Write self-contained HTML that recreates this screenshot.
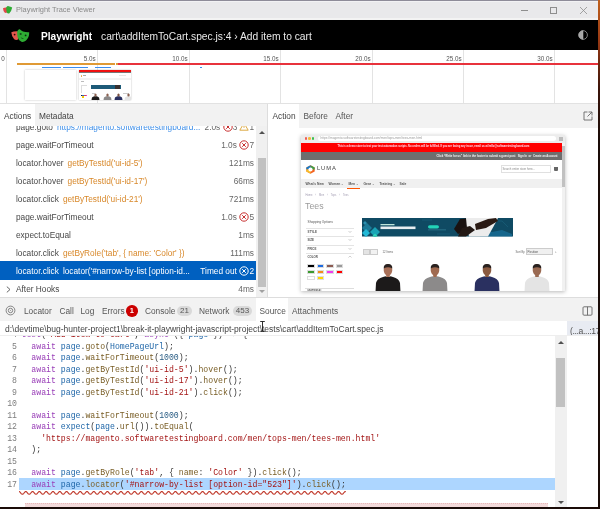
<!DOCTYPE html>
<html><head><meta charset="utf-8">
<style>
*{margin:0;padding:0;box-sizing:border-box}
html,body{width:600px;height:509px;overflow:hidden;background:linear-gradient(180deg,#c0601c 0,#9a3a14 40px,#3a140a 90px,#1a0c08 140px)}
body{position:relative;font-family:"Liberation Sans",sans-serif;color:#333}
.a{position:absolute;white-space:nowrap}
#win{position:absolute;left:0;top:0;width:598px;height:507px;background:#fff;overflow:hidden;filter:blur(0.35px)}
/* title bar */
#tb{left:0;top:0;width:598px;height:20px;background:linear-gradient(180deg,#f2f2f4 0,#f2f2f4 1px,#e9e9eb 1px,#e9e9eb 17px,#f3f3f3 17px);border-top:1px solid #8e8c99}
#tb .t{left:16px;top:4px;font-size:7.4px;line-height:10px;color:#8a8a8a}
/* header */
#hd{left:0;top:20px;width:598px;height:30px;background:#000}
/* timeline */
#tl{left:0;top:50px;width:598px;height:54px;background:#fff;border-bottom:1px solid #e2e2e2}
.gl{position:absolute;top:0;width:1px;height:53px;background:#e3e3e3}
.tk{position:absolute;top:5px;font-size:6.3px;line-height:7px;color:#555;text-align:right;width:29px}
/* tabs */
.tabs{background:#f2f2f2}
.tab{position:absolute;top:0;height:100%;font-size:8.3px;color:#555}
.tab.sel{background:#fff;color:#333}
/* action list */
.row{position:absolute;left:0;width:256px;height:18px;font-size:8.3px;line-height:18px;color:#333}
.row .n{position:absolute;left:16px}
.row .s{color:#c77d20}
.row .r{position:absolute;right:2px;color:#666}
.row{font-size:8.3px;color:#474747}
/* code */
.code{font-family:"Liberation Mono",monospace;font-size:8.2px}
.ln{position:absolute;left:0;width:17px;text-align:right;color:#7d7d7d}
.cl{position:absolute;left:21.5px;color:#333;white-space:pre}
.ln{white-space:pre}
.k{color:#9a40b8}
.v{color:#1f66a8}
.f{color:#795e26}
.st{color:#a31515}
.nm{color:#2a5d84}
</style></head><body>
<div id="win">
  <div id="tb" class="a">
    <svg class="a" style="left:0;top:-1px" width="20" height="20" viewBox="0 0 20 20">
      <path d="M3 8.2 Q5 7.2 7 7.6 L7.2 12.6 Q5.5 13.2 4.6 12.6 Q3.2 10.8 3 8.2Z" fill="#e04848"/>
      <path d="M6.2 7.4 Q7.5 5.8 8.6 6.2 Q10.5 6.6 12.2 7.6 Q11.6 11.2 9.2 13.4 Q7.2 13.6 6.8 12.4 Q6.2 10 6.2 7.4Z" fill="#2eac33"/>
    </svg>
    <div class="a t">Playwright Trace Viewer</div>
    <div class="a" style="left:521px;top:9.3px;width:7px;height:1px;background:#8e8e8e"></div>
    <div class="a" style="left:550px;top:6px;width:7px;height:7px;border:0.9px solid #8e8e8e"></div>
    <svg class="a" style="left:579px;top:5px" width="9" height="9" viewBox="0 0 9 9"><path d="M1 1L8 8M8 1L1 8" stroke="#8e8e8e" stroke-width="0.8"/></svg>
  </div>
  <div id="hd" class="a">
    <svg class="a" style="left:8px;top:4px" width="26" height="22" viewBox="8 24 26 22">
      <path d="M11.3 32.2 Q14 31.2 18 31.4 L18.2 39.6 Q15.6 40.4 14.2 39.2 Q11.6 36.6 11.3 32.2Z" fill="#e2574c"/>
      <circle cx="14.6" cy="34.6" r="0.9" fill="#300"/>
      <path d="M17.2 31.2 Q18.6 28.8 19.8 29.2 Q21.2 30.6 23 31.4 Q26 32.4 29.2 32.2 Q29.4 37.2 26 40.6 Q23.8 42.4 21.4 41.8 Q18.6 40.4 17.6 37.2 Q17 34.2 17.2 31.2Z" fill="#2ead33"/>
      <ellipse cx="20.7" cy="34" rx="1.1" ry="0.8" fill="#0a2a10"/>
      <circle cx="25.6" cy="35.4" r="0.9" fill="#0a2a10"/>
      <path d="M20.5 37.4 Q22.5 37.6 24 38.8 Q22 39.2 20.5 37.4Z" fill="#0a2a10"/>
    </svg>
    <svg class="a" style="left:577px;top:9px" width="12" height="12" viewBox="0 0 12 12"><circle cx="6" cy="6" r="4.4" fill="none" stroke="#a0a0a0" stroke-width="0.8"/><path d="M6 1.6 A4.4 4.4 0 0 0 6 10.4Z" fill="#a8a8a8"/><path d="M6 1.6V10.4" stroke="#c0c0c0" stroke-width="0.5"/></svg>
    <div class="a" style="left:41px;top:10.5px;font-size:10.1px;font-weight:bold;color:#fff;line-height:12px">Playwright</div>
    <div class="a" style="left:101px;top:10.5px;font-size:10.25px;color:#e8e8e8;line-height:12px">cart\addItemToCart.spec.js:4 › Add item to cart</div>
  </div>
  <div id="tl" class="a">
    <div class="gl" style="left:6px"></div>
    <div class="gl" style="left:97px"></div>
    <div class="gl" style="left:189px"></div>
    <div class="gl" style="left:280px"></div>
    <div class="gl" style="left:372px"></div>
    <div class="gl" style="left:463px"></div>
    <div class="gl" style="left:554px"></div>
    <div class="tk" style="left:-24.3px">0</div><div class="tk" style="left:66.7px">5.0s</div><div class="tk" style="left:158.7px">10.0s</div><div class="tk" style="left:249.7px">15.0s</div><div class="tk" style="left:341.7px">20.0s</div><div class="tk" style="left:432.7px">25.0s</div><div class="tk" style="left:523.7px">30.0s</div>
    <div class="a" style="left:16.5px;top:13px;width:98px;height:1.8px;background:#e09a35"></div>
    <div class="a" style="left:116px;top:13px;width:2px;height:1.8px;background:#e09a35"></div>
    <div class="a" style="left:118px;top:13px;width:480px;height:1.8px;background:#e8323c"></div>
    <div class="a" style="left:42px;top:16.6px;width:19.4px;height:1.5px;background:#3b8df0"></div>
    <div class="a" style="left:63px;top:16.6px;width:25.4px;height:1.5px;background:#3b8df0"></div>
    <div class="a" style="left:94.6px;top:16.6px;width:16.4px;height:1.5px;background:#3b8df0"></div>
    <div class="a" style="left:200px;top:16.6px;width:1.5px;height:1.5px;background:#3b8df0"></div>
    <div class="a" style="left:24.6px;top:20.4px;width:51.4px;height:29.2px;background:#fff;box-shadow:0 0 2px rgba(0,0,0,.25)"></div>
    <div class="a" style="left:79px;top:20px;width:52px;height:30px;background:#fff;box-shadow:0 0 1.5px rgba(0,0,0,.3);overflow:hidden">
      <div class="a" style="left:0;top:0;width:52px;height:2px;background:#f01010"></div>
      <div class="a" style="left:0;top:2px;width:52px;height:1px;background:#777"></div>
      <div class="a" style="left:1.5px;top:5px;width:1.6px;height:1.6px;background:#e9a23b;border-radius:50%"></div>
      <div class="a" style="left:3.5px;top:5.3px;width:3px;height:1px;background:#aaa"></div>
      <div class="a" style="left:40px;top:5.2px;width:7px;height:1.2px;background:#e6e6e6"></div>
      <div class="a" style="left:0;top:8px;width:52px;height:1.5px;background:#f2f2f2"></div>
      <div class="a" style="left:1.5px;top:11.2px;width:3px;height:1.2px;background:#bbb"></div>
      <div class="a" style="left:1.5px;top:15px;width:6.5px;height:8px;border-left:0.6px solid #ddd;border-top:0.6px solid #ddd"></div>
      <div class="a" style="left:12px;top:15px;width:30px;height:3.8px;background:#1d5a78"></div>
      <div class="a" style="left:36px;top:15px;width:5px;height:3.8px;background:#3a3030"></div>
      <div class="a" style="left:1.5px;top:24.5px;width:1.5px;height:1.5px;background:#222"></div>
      <div class="a" style="left:3.2px;top:24.5px;width:1.5px;height:1.5px;background:#36c"></div>
      <div class="a" style="left:5px;top:24.5px;width:1.5px;height:1.5px;background:#c55"></div>
      <div class="a" style="left:6.7px;top:24.5px;width:1.5px;height:1.5px;background:#e3c"></div>
      <div class="a" style="left:3.2px;top:26.2px;width:1.5px;height:1.5px;background:#fc0"></div>
      <div class="a" style="left:13px;top:23px;width:3px;height:1px;background:#ccc"></div>
      <div class="a" style="left:44px;top:23px;width:6px;height:1px;background:#ccc"></div>
      <svg class="a" style="left:0;top:0" width="52" height="30" viewBox="0 0 52 30">
        <g><path d="M12.5 30 L13 27.5 Q14 26.6 15.3 26.3 L17.7 26.3 Q19 26.6 20 27.5 L20.5 30Z" fill="#1c1a1a"/><ellipse cx="16.5" cy="25" rx="1.2" ry="1.6" fill="#8a6050"/></g>
        <g><path d="M24.5 30 L25 27.5 Q26 26.6 27.3 26.3 L29.7 26.3 Q31 26.6 32 27.5 L32.5 30Z" fill="#8c8a8a"/><ellipse cx="28.5" cy="25" rx="1.2" ry="1.6" fill="#8a6050"/></g>
        <g><path d="M35.5 30 L36 27.5 Q37 26.6 38.3 26.3 L40.7 26.3 Q42 26.6 43 27.5 L43.5 30Z" fill="#2a3060"/><ellipse cx="39.5" cy="25" rx="1.2" ry="1.6" fill="#7a5040"/></g>
        <g><path d="M45.5 30 L46 27.5 Q47 26.6 48.3 26.3 L50.7 26.3 Q52 26.6 53 27.5 L53.5 30Z" fill="#e4e4e4"/><ellipse cx="49.5" cy="25" rx="1.2" ry="1.6" fill="#8a6050"/></g>
      </svg>
    </div>
  </div>
  <!-- left tabs -->
  <div class="a tabs" style="left:0;top:104px;width:267px;height:22px">
    <div class="tab sel" style="left:0;width:35px"></div>
    <div class="a" style="left:4px;top:1.2px;font-size:8.3px;line-height:22px;color:#444">Actions</div>
    <div class="a" style="left:39px;top:1.2px;font-size:8.3px;line-height:22px;color:#444">Metadata</div>
  </div>
  <!-- action list -->
  <div class="a" style="left:0;top:126px;width:267px;height:172px;background:#fff;overflow:hidden">
    <div class="row" style="top:-8.5px"><span class="n">page.goto<span style="color:#3d8ee8;margin-left:4px">https://magento.softwaretestingboard...</span></span><span class="r" style="color:#666">2.0s<svg width="10" height="10" viewBox="0 0 10 10" style="vertical-align:-2px;margin-left:2.5px"><circle cx="5" cy="5" r="4.2" fill="none" stroke="#c83030" stroke-width="1"/><path d="M3.2 3.2L6.8 6.8M6.8 3.2L3.2 6.8" stroke="#c83030" stroke-width="1"/></svg>3<svg width="10" height="9" viewBox="0 0 10 9" style="vertical-align:-1.5px;margin-left:2px"><path d="M5 1L9.2 8.2H0.8Z" fill="none" stroke="#d9a030" stroke-width="0.9"/><path d="M5 3.5V5.8" stroke="#d9a030" stroke-width="0.9"/></svg>1</span></div>
    <div class="row" style="top:9.5px"><span class="n">page.waitForTimeout</span><span class="r" style="color:#666">1.0s<svg width="10" height="10" viewBox="0 0 10 10" style="vertical-align:-2px;margin-left:2.5px"><circle cx="5" cy="5" r="4.2" fill="none" stroke="#c83030" stroke-width="1"/><path d="M3.2 3.2L6.8 6.8M6.8 3.2L3.2 6.8" stroke="#c83030" stroke-width="1"/></svg>7</span></div>
    <div class="row" style="top:27.5px"><span class="n">locator.hover<span style="color:#d8882a;margin-left:4px">getByTestId('ui-id-5')</span></span><span class="r" style="color:#666">121ms</span></div>
    <div class="row" style="top:45.5px"><span class="n">locator.hover<span style="color:#d8882a;margin-left:4px">getByTestId('ui-id-17')</span></span><span class="r" style="color:#666">66ms</span></div>
    <div class="row" style="top:63.5px"><span class="n">locator.click<span style="color:#d8882a;margin-left:4px">getByTestId('ui-id-21')</span></span><span class="r" style="color:#666">721ms</span></div>
    <div class="row" style="top:81.5px"><span class="n">page.waitForTimeout</span><span class="r" style="color:#666">1.0s<svg width="10" height="10" viewBox="0 0 10 10" style="vertical-align:-2px;margin-left:2.5px"><circle cx="5" cy="5" r="4.2" fill="none" stroke="#c83030" stroke-width="1"/><path d="M3.2 3.2L6.8 6.8M6.8 3.2L3.2 6.8" stroke="#c83030" stroke-width="1"/></svg>5</span></div>
    <div class="row" style="top:99.5px"><span class="n">expect.toEqual</span><span class="r" style="color:#666">1ms</span></div>
    <div class="row" style="top:117.5px"><span class="n">locator.click<span style="color:#d8882a;margin-left:4px">getByRole('tab', { name: 'Color' })</span></span><span class="r" style="color:#666">111ms</span></div>
    <div class="a" style="left:0;top:135px;width:256px;height:19px;background:#0060c0"></div>
    <div class="row" style="top:135.5px;color:#fff"><span class="n">locator.click<span style="color:#fff;margin-left:4px">locator('#narrow-by-list [option-id...</span></span><span class="r" style="color:#fff">Timed out<svg width="10" height="10" viewBox="0 0 10 10" style="vertical-align:-2px;margin-left:2.5px"><circle cx="5" cy="5" r="4.2" fill="none" stroke="#fff" stroke-width="1"/><path d="M3.2 3.2L6.8 6.8M6.8 3.2L3.2 6.8" stroke="#fff" stroke-width="1"/></svg>2</span></div>
    <div class="row" style="top:153.5px"><svg class="a" style="left:6px;top:6px" width="5" height="7" viewBox="0 0 5 7"><path d="M0.8 0.6L4 3.5L0.8 6.4" fill="none" stroke="#555" stroke-width="0.9"/></svg><span class="n">After Hooks</span><span class="r" style="color:#666">4ms</span></div>
    <div class="a" style="left:256px;top:0;width:11px;height:172px;background:#f0f0f0"></div>
    <div class="a" style="left:258px;top:31.7px;width:7.7px;height:129.7px;background:#c1c1c1"></div>
    <svg class="a" style="left:258px;top:4px" width="8" height="5" viewBox="0 0 8 5"><path d="M1 4L4 1L7 4Z" fill="#505050"/></svg>
    <svg class="a" style="left:258px;top:163px" width="8" height="5" viewBox="0 0 8 5"><path d="M1 1L4 4L7 1Z" fill="#a0a0a0"/></svg>
  </div>
  <!-- right panel -->
  <div class="a" style="left:267px;top:104px;width:331px;height:194px;background:#fff;border-left:1px solid #ddd">
    <div class="a tabs" style="left:0;top:0;width:330px;height:23.5px">
      <div class="tab sel" style="left:0;width:31px"></div>
      <div class="a" style="left:4.5px;top:1px;font-size:8.3px;line-height:23px;color:#444">Action</div>
      <div class="a" style="left:35.5px;top:1px;font-size:8.3px;line-height:23px;color:#555">Before</div>
      <div class="a" style="left:67.5px;top:1px;font-size:8.3px;line-height:23px;color:#555">After</div>
      <div class="a" style="left:32.5px;top:30.5px;width:264.5px;height:156.5px;background:#fff;box-shadow:0 1px 4px rgba(0,0,0,.28);overflow:hidden">
        <div class="a" style="left:0.0px;top:0.0px;width:265.0px;height:8.0px;background:#ececec"></div>
        <div class="a" style="left:4.2px;top:2.8px;width:2.6px;height:2.6px;border-radius:50%;background:#f25b50"></div>
        <div class="a" style="left:7.7px;top:2.8px;width:2.6px;height:2.6px;border-radius:50%;background:#f6b83e"></div>
        <div class="a" style="left:11.2px;top:2.8px;width:2.6px;height:2.6px;border-radius:50%;background:#3cbf4e"></div>
        <div class="a" style="left:17.0px;top:1.3px;width:238.0px;height:5.4px;background:#fff;border-radius:3px"></div>
        <div class="a" style="left:20.0px;top:1.2px;font-size:3.2px;line-height:5px;color:#9a9a9a">https://magento.softwaretestingboard.com/men/tops-men/tees-men.html</div>
        <div class="a" style="left:258.0px;top:2.0px;width:4.0px;height:4.0px;background:#bbb"></div>
        <div class="a" style="left:0.0px;top:8.0px;width:261.5px;height:9.3px;background:#ff0000"></div>
        <div class="a" style="left:37.0px;top:10.5px;font-size:2.6px;line-height:4px;color:#fde;font-weight:bold">This is a demo store to test your test automation scripts. No orders will be fulfilled. If you are facing any issue, email us at hello@softwaretestingboard.com</div>
        <div class="a" style="left:0.0px;top:17.3px;width:261.5px;height:7.8px;background:#6e6e6e"></div>
        <div class="a" style="left:136.0px;top:19.2px;font-size:2.8px;line-height:4px;color:#f4f4f4;font-weight:bold">Click “Write for us” link in the footer to submit a guest post &nbsp; Sign In &nbsp;or&nbsp; Create an Account</div>
        <svg class="a" style="left:5px;top:30px" width="9" height="9" viewBox="0 0 9 9"><path d="M4.5 0.3L8.7 2.4V6.6L4.5 8.7L0.3 6.6V2.4Z" fill="#f26322"/><path d="M4.5 0.3L8.7 2.4V4.5L4.5 4.5Z" fill="#3d9e47"/><path d="M0.3 2.4L4.5 0.3V4.5H0.3Z" fill="#1979c3"/><path d="M0.3 6.6L4.5 8.7V4.5H0.3Z" fill="#f6bd2a"/><circle cx="4.5" cy="4.5" r="2.1" fill="#fff"/></svg>
        <div class="a" style="left:16.5px;top:30.8px;font-size:5.8px;line-height:7px;color:#444;letter-spacing:0.9px">LUMA</div>
        <div class="a" style="left:200.0px;top:30.8px;width:50.0px;height:7.7px;background:#fff;border:0.6px solid #e0e0e0"></div>
        <div class="a" style="left:202.0px;top:32.5px;font-size:2.8px;line-height:4px;color:#888">Search entire store here...</div>
        <div class="a" style="left:253.0px;top:32.0px;width:4.0px;height:4.0px;background:#666;border-radius:0 0 1px 1px"></div>
        <div class="a" style="left:0.0px;top:44.2px;width:261.5px;height:9.4px;background:#f0f0f0"></div>
        <div class="a" style="left:5.0px;top:47.0px;font-size:3.3px;line-height:4px;color:#555;font-weight:bold">What's New</div>
        <div class="a" style="left:28.0px;top:47.0px;font-size:3.3px;line-height:4px;color:#555;font-weight:bold">Women ⌄</div>
        <div class="a" style="left:48.0px;top:47.0px;font-size:3.3px;line-height:4px;color:#555;font-weight:bold">Men ⌄</div>
        <div class="a" style="left:63.0px;top:47.0px;font-size:3.3px;line-height:4px;color:#555;font-weight:bold">Gear ⌄</div>
        <div class="a" style="left:79.0px;top:47.0px;font-size:3.3px;line-height:4px;color:#555;font-weight:bold">Training ⌄</div>
        <div class="a" style="left:99.0px;top:47.0px;font-size:3.3px;line-height:4px;color:#555;font-weight:bold">Sale</div>
        <div class="a" style="left:46.0px;top:53.2px;width:13.0px;height:1.1px;background:#ff5501"></div>
        <div class="a" style="left:5.0px;top:59.8px;font-size:2.6px;line-height:3px;color:#a09ab0;word-spacing:2.2px">Home › Men › Tops › Tees</div>
        <div class="a" style="left:4.5px;top:66.2px;font-size:8.8px;line-height:10px;color:#9a9a9a">Tees</div>
        <div class="a" style="left:7.0px;top:85.5px;font-size:3.2px;line-height:4px;color:#555">Shopping Options</div>
        <div class="a" style="left:5.0px;top:93.0px;width:48.0px;height:0.5px;background:#e4e4e4"></div>
        <div class="a" style="left:7.0px;top:95.2px;font-size:2.9px;line-height:4px;color:#555;font-weight:bold">STYLE</div>
        <svg class="a" style="left:47.0px;top:95.3px" width="4" height="3.5" viewBox="0 0 4 3.5"><path d="M0.5 1L2 2.5L3.5 1" fill="none" stroke="#888" stroke-width="0.4"/></svg>
        <div class="a" style="left:5.0px;top:101.5px;width:48.0px;height:0.5px;background:#e4e4e4"></div>
        <div class="a" style="left:7.0px;top:103.7px;font-size:2.9px;line-height:4px;color:#555;font-weight:bold">SIZE</div>
        <svg class="a" style="left:47.0px;top:103.8px" width="4" height="3.5" viewBox="0 0 4 3.5"><path d="M0.5 1L2 2.5L3.5 1" fill="none" stroke="#888" stroke-width="0.4"/></svg>
        <div class="a" style="left:5.0px;top:110.0px;width:48.0px;height:0.5px;background:#e4e4e4"></div>
        <div class="a" style="left:7.0px;top:112.2px;font-size:2.9px;line-height:4px;color:#555;font-weight:bold">PRICE</div>
        <svg class="a" style="left:47.0px;top:112.3px" width="4" height="3.5" viewBox="0 0 4 3.5"><path d="M0.5 1L2 2.5L3.5 1" fill="none" stroke="#888" stroke-width="0.4"/></svg>
        <div class="a" style="left:5.0px;top:118.0px;width:48.0px;height:0.5px;background:#e4e4e4"></div>
        <div class="a" style="left:7.0px;top:120.2px;font-size:2.9px;line-height:4px;color:#555;font-weight:bold">COLOR</div>
        <svg class="a" style="left:47.0px;top:120.3px" width="4" height="3.5" viewBox="0 0 4 3.5"><path d="M0.5 2.5L2 1L3.5 2.5" fill="none" stroke="#888" stroke-width="0.4"/></svg>
        <div class="a" style="left:6.7px;top:129.0px;width:7.5px;height:4.6px;background:#000;border:0.4px solid #ddd"></div>
        <div class="a" style="left:16.2px;top:129.0px;width:7.5px;height:4.6px;background:#1c6ae0;border:0.4px solid #ddd"></div>
        <div class="a" style="left:25.7px;top:129.0px;width:7.5px;height:4.6px;background:#8c5b52;border:0.4px solid #ddd"></div>
        <div class="a" style="left:35.2px;top:129.0px;width:7.5px;height:4.6px;background:#9a9a9a;border:0.4px solid #ddd"></div>
        <div class="a" style="left:6.7px;top:135.0px;width:7.5px;height:4.6px;background:#3b9a2e;border:0.4px solid #ddd"></div>
        <div class="a" style="left:16.2px;top:135.0px;width:7.5px;height:4.6px;background:#f28d1b;border:0.4px solid #ddd"></div>
        <div class="a" style="left:25.7px;top:135.0px;width:7.5px;height:4.6px;background:#ef3df0;border:0.4px solid #ddd"></div>
        <div class="a" style="left:35.2px;top:135.0px;width:7.5px;height:4.6px;background:#ff0000;border:0.4px solid #ddd"></div>
        <div class="a" style="left:6.7px;top:141.0px;width:7.5px;height:4.6px;background:#fff;border:0.4px solid #ddd"></div>
        <div class="a" style="left:16.2px;top:141.0px;width:7.5px;height:4.6px;background:#ffd500;border:0.4px solid #ddd"></div>
        <div class="a" style="left:4.0px;top:153.0px;width:49.0px;height:0.5px;background:#ddd"></div>
        <div class="a" style="left:7.0px;top:154.2px;font-size:2.9px;line-height:4px;color:#555;font-weight:bold">MATERIAL</div>
        <svg class="a" style="left:61.8px;top:83.8px" width="151.2" height="18.5" viewBox="0 0 151.2 18.5">
<rect width="151.2" height="18.5" fill="#0f4a63"/>
<path d="M0 10 L5 5 L10 10 L5 15Z" fill="#1c7a98"/><path d="M8 14 L13 9 L18 14 L13 19Z" fill="#1aa3b5"/><path d="M0 15 L4 11 L8 15 L4 19Z" fill="#22b8d6"/><path d="M10 18.5 L13 15.5 L16 18.5Z" fill="#2fd5b8"/><path d="M1 5 L3 3 L5 5 L3 7Z" fill="#2a8fb0"/>
<rect x="18.5" y="6" width="14" height="1.3" fill="#dfe" opacity=".85"/>
<rect x="18.5" y="8.5" width="35" height="2.6" fill="#fff" opacity=".9"/>
<rect x="66" y="7.2" width="11" height="3.2" rx="1.6" fill="#23d3b8"/>
<rect x="66" y="11.6" width="18" height="0.6" fill="#3a8aa0"/>
<path d="M60 2 L70 2 M75 16 L88 16 M125 3 L140 3 L146 9" stroke="#1e6a85" stroke-width="0.5" fill="none"/>
<path d="M120 10 L130 14 L140 12 L150 16 L150 18.5 L118 18.5Z" fill="#1a7aa8" opacity=".6"/>
<path d="M98 1 L108 0 L112 5 L104 12 L96 16 L92 11Z" fill="#1a1210"/>
<path d="M104 0 L116 0 L136 0 L134 4 L126 18.5 L107 18.5 L105 10Z" fill="#ececec"/>
<path d="M113 6 L126 1 L134 0 L136 3 L124 10 L114 12Z" fill="#2a1a14"/>
<path d="M100 10 L108 8 L113 12 L104 18.5 L96 18.5Z" fill="#231814"/>
</svg>
<div class="a" style="left:62.0px;top:114.0px;width:7.5px;height:6.2px;background:#e4e4e4;border:0.5px solid #ccc"></div>
        <div class="a" style="left:69.5px;top:114.0px;width:7.5px;height:6.2px;background:#f2f2f2;border:0.5px solid #ccc"></div>
        <div class="a" style="left:82.0px;top:115.5px;font-size:2.8px;line-height:4px;color:#666">12 Items</div>
        <div class="a" style="left:215.0px;top:115.5px;font-size:2.8px;line-height:4px;color:#666">Sort By</div>
        <div class="a" style="left:225.0px;top:113.0px;width:27.0px;height:7.2px;background:#f0f0f0;border:0.5px solid #ccc"></div>
        <div class="a" style="left:227.0px;top:115.0px;font-size:3px;line-height:4px;color:#555">Position</div>
        <div class="a" style="left:254.5px;top:115.0px;font-size:3.5px;line-height:4px;color:#555">↓</div>
        <svg class="a" style="left:0;top:0" width="265" height="157" viewBox="0 0 265 157"><path d="M74.5 157 L75 148 Q76 143.5 82 142 L84.5 141.2 Q87 143 89.5 141.2 L92 142 Q98 143.5 99 148 L99.5 157Z" fill="#1c1a1a"/><rect x="85.2" y="138.5" width="3.6" height="3.5" fill="#a87058"/><ellipse cx="87" cy="135" rx="4.3" ry="5.8" fill="#a87058"/><path d="M82.7 133.5 Q82.5 128.8 87 129 Q91.5 128.8 91.3 133.5 Q87 131 82.7 133.5Z" fill="#2a2220"/><path d="M121.5 157 L122 148 Q123 143.5 129 142 L131.5 141.2 Q134 143 136.5 141.2 L139 142 Q145 143.5 146 148 L146.5 157Z" fill="#8c8a8a"/><rect x="132.2" y="138.5" width="3.6" height="3.5" fill="#a06a50"/><ellipse cx="134" cy="135" rx="4.3" ry="5.8" fill="#a06a50"/><path d="M129.7 133.5 Q129.5 128.8 134 129 Q138.5 128.8 138.3 133.5 Q134 131 129.7 133.5Z" fill="#2a2220"/><path d="M173.5 157 L174 148 Q175 143.5 181 142 L183.5 141.2 Q186 143 188.5 141.2 L191 142 Q197 143.5 198 148 L198.5 157Z" fill="#2a3060"/><rect x="184.2" y="138.5" width="3.6" height="3.5" fill="#8a5a40"/><ellipse cx="186" cy="135" rx="4.3" ry="5.8" fill="#8a5a40"/><path d="M181.7 133.5 Q181.5 128.8 186 129 Q190.5 128.8 190.3 133.5 Q186 131 181.7 133.5Z" fill="#2a2220"/><path d="M223.5 157 L224 148 Q225 143.5 231 142 L233.5 141.2 Q236 143 238.5 141.2 L241 142 Q247 143.5 248 148 L248.5 157Z" fill="#e4e4e4"/><rect x="234.2" y="138.5" width="3.6" height="3.5" fill="#9a6a52"/><ellipse cx="236" cy="135" rx="4.3" ry="5.8" fill="#9a6a52"/><path d="M231.7 133.5 Q231.5 128.8 236 129 Q240.5 128.8 240.3 133.5 Q236 131 231.7 133.5Z" fill="#2a2220"/></svg>
        <div class="a" style="left:261.5px;top:8.0px;width:3.5px;height:149.0px;background:#f1f1f1"></div>
        <div class="a" style="left:261.8px;top:11.0px;width:2.7px;height:41.0px;background:#c1c1c1"></div>
      </div>
      <svg class="a" style="left:315px;top:7px" width="10" height="10" viewBox="0 0 10 10"><path d="M4.5 1H1V9H9V5.5" fill="none" stroke="#666" stroke-width="0.9"/><path d="M5.5 1H9V4.5M9 1L4.5 5.5" fill="none" stroke="#666" stroke-width="0.9"/></svg>
    </div>
  </div>
  <!-- bottom tabs -->
  <div class="a tabs" style="left:0;top:297px;width:598px;height:24px;border-top:1px solid #ddd">
    <svg class="a" style="left:4.5px;top:7px" width="11" height="11" viewBox="0 0 11 11"><circle cx="5.5" cy="5.5" r="4.4" fill="none" stroke="#777" stroke-width="0.9"/><circle cx="5.5" cy="5.5" r="2.2" fill="none" stroke="#777" stroke-width="0.9"/><circle cx="5.5" cy="5.5" r="0.6" fill="#999"/></svg>
    <div class="a" style="left:24px;top:1.6px;font-size:8.3px;line-height:23px;color:#555">Locator</div>
    <div class="a" style="left:59.5px;top:1.6px;font-size:8.3px;line-height:23px;color:#555">Call</div>
    <div class="a" style="left:80.5px;top:1.6px;font-size:8.3px;line-height:23px;color:#555">Log</div>
    <div class="a" style="left:102px;top:1.6px;font-size:8.3px;line-height:23px;color:#555">Errors</div>
    <div class="a" style="left:126px;top:7.2px;width:11.5px;height:11.5px;border-radius:50%;background:#c00;color:#fff;font-size:7.5px;line-height:11.5px;text-align:center;font-weight:bold">1</div>
    <div class="a" style="left:145px;top:1.6px;font-size:8.3px;line-height:23px;color:#555">Console</div>
    <div class="a" style="left:177px;top:7.7px;width:15px;height:10.5px;border-radius:5px;background:#d9d9d9;color:#555;font-size:8px;line-height:10.5px;text-align:center">21</div>
    <div class="a" style="left:199px;top:1.6px;font-size:8.3px;line-height:23px;color:#555">Network</div>
    <div class="a" style="left:233px;top:7.7px;width:19px;height:10.5px;border-radius:5px;background:#d9d9d9;color:#555;font-size:8px;line-height:10.5px;text-align:center">453</div>
    <div class="tab sel" style="left:256px;width:32px"></div>
    <div class="a" style="left:259.5px;top:1.6px;font-size:8.3px;line-height:23px;color:#555">Source</div>
    <div class="a" style="left:292px;top:1.6px;font-size:8.3px;line-height:23px;color:#555">Attachments</div>
    <svg class="a" style="left:582px;top:8px" width="11" height="10" viewBox="0 0 11 10"><rect x="1" y="0.8" width="9" height="8.4" rx="1" fill="none" stroke="#666" stroke-width="0.9"/><path d="M5.5 0.8V9.2" stroke="#666" stroke-width="0.9"/></svg>
  </div>
  <!-- path bar -->
  <div class="a" style="left:0;top:321px;width:567px;height:14px;background:#fff">
    <div class="a" style="left:5px;top:0.6px;font-size:8.5px;line-height:15px;color:#444">d:\devtime\bug-hunter-project1\break-it-playwright-javascript-project\tests\cart\addItemToCart.spec.js</div>
  </div>
  <div class="a" style="left:567px;top:321px;width:31px;height:17px;background:#e8ebf2">
    <div class="a" style="left:3px;top:2px;font-size:8.6px;line-height:17px;color:#555;letter-spacing:-0.35px">(...a...:17</div>
  </div>
  <!-- code -->
  <div class="a code" style="left:0;top:335px;width:598px;height:172px;background:#fff;border-top:1px solid #eee;line-height:11.5px;overflow:hidden">
    <div class="a" style="left:18.7px;top:142px;width:536.3px;height:11.5px;background:#add6ff"></div>
    <div class="ln" style="top:-6.75px">4</div><div class="cl" style="top:-6.75px"><span class="k">test</span>(<span class="st">&#x27;Add item to cart&#x27;</span>, <span class="k">async</span> ({ <span class="v">page</span> }) =&gt; {</div>
    <div class="ln" style="top:4.75px">5</div><div class="cl" style="top:4.75px">  <span class="k">await</span> <span class="v">page</span>.<span class="f">goto</span>(<span class="v">HomePageUrl</span>);</div>
    <div class="ln" style="top:16.25px">6</div><div class="cl" style="top:16.25px">  <span class="k">await</span> <span class="v">page</span>.<span class="f">waitForTimeout</span>(<span class="nm">1000</span>);</div>
    <div class="ln" style="top:27.75px">7</div><div class="cl" style="top:27.75px">  <span class="k">await</span> <span class="v">page</span>.<span class="f">getByTestId</span>(<span class="st">&#x27;ui-id-5&#x27;</span>).<span class="f">hover</span>();</div>
    <div class="ln" style="top:39.25px">8</div><div class="cl" style="top:39.25px">  <span class="k">await</span> <span class="v">page</span>.<span class="f">getByTestId</span>(<span class="st">&#x27;ui-id-17&#x27;</span>).<span class="f">hover</span>();</div>
    <div class="ln" style="top:50.75px">9</div><div class="cl" style="top:50.75px">  <span class="k">await</span> <span class="v">page</span>.<span class="f">getByTestId</span>(<span class="st">&#x27;ui-id-21&#x27;</span>).<span class="f">click</span>();</div>
    <div class="ln" style="top:62.25px">10</div><div class="cl" style="top:62.25px"></div>
    <div class="ln" style="top:73.75px">11</div><div class="cl" style="top:73.75px">  <span class="k">await</span> <span class="v">page</span>.<span class="f">waitForTimeout</span>(<span class="nm">1000</span>);</div>
    <div class="ln" style="top:85.25px">12</div><div class="cl" style="top:85.25px">  <span class="k">await</span> <span class="v">expect</span>(<span class="v">page</span>.<span class="f">url</span>()).<span class="f">toEqual</span>(</div>
    <div class="ln" style="top:96.75px">13</div><div class="cl" style="top:96.75px">    <span class="st">&#x27;https://magento.softwaretestingboard.com/men/tops-men/tees-men.html&#x27;</span></div>
    <div class="ln" style="top:108.25px">14</div><div class="cl" style="top:108.25px">  );</div>
    <div class="ln" style="top:119.75px">15</div><div class="cl" style="top:119.75px"></div>
    <div class="ln" style="top:131.25px">16</div><div class="cl" style="top:131.25px">  <span class="k">await</span> <span class="v">page</span>.<span class="f">getByRole</span>(<span class="st">&#x27;tab&#x27;</span>, { <span class="f">name</span>: <span class="st">&#x27;Color&#x27;</span> }).<span class="f">click</span>();</div>
    <div class="ln" style="top:142.75px">17</div><div class="cl" style="top:142.75px">  <span class="k">await</span> <span class="v">page</span>.<span class="f">locator</span>(<span class="st">&#x27;#narrow-by-list [option-id=&quot;523&quot;]&#x27;</span>).<span class="f">click</span>();</div>
    <svg class="a" style="left:18.5px;top:155.4px" width="328" height="5" viewBox="0 0 328 5"><polyline points="0.0,0.50 0.4,0.59 0.8,0.87 1.2,1.28 1.6,1.77 2.0,2.28 2.4,2.74 2.8,3.09 3.2,3.28 3.6,3.28 4.0,3.09 4.4,2.74 4.8,2.28 5.2,1.77 5.6,1.28 6.0,0.87 6.4,0.59 6.8,0.50 7.2,0.59 7.6,0.87 8.0,1.28 8.4,1.77 8.8,2.28 9.2,2.74 9.6,3.09 10.0,3.28 10.4,3.28 10.8,3.09 11.2,2.74 11.6,2.28 12.0,1.77 12.4,1.28 12.8,0.87 13.2,0.59 13.6,0.50 14.0,0.59 14.4,0.87 14.8,1.28 15.2,1.77 15.6,2.28 16.0,2.74 16.4,3.09 16.8,3.28 17.2,3.28 17.6,3.09 18.0,2.74 18.4,2.28 18.8,1.77 19.2,1.28 19.6,0.87 20.0,0.59 20.4,0.50 20.8,0.59 21.2,0.87 21.6,1.28 22.0,1.77 22.4,2.28 22.8,2.74 23.2,3.09 23.6,3.28 24.0,3.28 24.4,3.09 24.8,2.74 25.2,2.28 25.6,1.77 26.0,1.28 26.4,0.87 26.8,0.59 27.2,0.50 27.6,0.59 28.0,0.87 28.4,1.28 28.8,1.77 29.2,2.28 29.6,2.74 30.0,3.09 30.4,3.28 30.8,3.28 31.2,3.09 31.6,2.74 32.0,2.28 32.4,1.77 32.8,1.28 33.2,0.87 33.6,0.59 34.0,0.50 34.4,0.59 34.8,0.87 35.2,1.28 35.6,1.77 36.0,2.28 36.4,2.74 36.8,3.09 37.2,3.28 37.6,3.28 38.0,3.09 38.4,2.74 38.8,2.28 39.2,1.77 39.6,1.28 40.0,0.87 40.4,0.59 40.8,0.50 41.2,0.59 41.6,0.87 42.0,1.28 42.4,1.77 42.8,2.28 43.2,2.74 43.6,3.09 44.0,3.28 44.4,3.28 44.8,3.09 45.2,2.74 45.6,2.28 46.0,1.77 46.4,1.28 46.8,0.87 47.2,0.59 47.6,0.50 48.0,0.59 48.4,0.87 48.8,1.28 49.2,1.77 49.6,2.28 50.0,2.74 50.4,3.09 50.8,3.28 51.2,3.28 51.6,3.09 52.0,2.74 52.4,2.28 52.8,1.77 53.2,1.28 53.6,0.87 54.0,0.59 54.4,0.50 54.8,0.59 55.2,0.87 55.6,1.28 56.0,1.77 56.4,2.28 56.8,2.74 57.2,3.09 57.6,3.28 58.0,3.28 58.4,3.09 58.8,2.74 59.2,2.28 59.6,1.77 60.0,1.28 60.4,0.87 60.8,0.59 61.2,0.50 61.6,0.59 62.0,0.87 62.4,1.28 62.8,1.77 63.2,2.28 63.6,2.74 64.0,3.09 64.4,3.28 64.8,3.28 65.2,3.09 65.6,2.74 66.0,2.28 66.4,1.77 66.8,1.28 67.2,0.87 67.6,0.59 68.0,0.50 68.4,0.59 68.8,0.87 69.2,1.28 69.6,1.77 70.0,2.28 70.4,2.74 70.8,3.09 71.2,3.28 71.6,3.28 72.0,3.09 72.4,2.74 72.8,2.28 73.2,1.77 73.6,1.28 74.0,0.87 74.4,0.59 74.8,0.50 75.2,0.59 75.6,0.87 76.0,1.28 76.4,1.77 76.8,2.28 77.2,2.74 77.6,3.09 78.0,3.28 78.4,3.28 78.8,3.09 79.2,2.74 79.6,2.28 80.0,1.77 80.4,1.28 80.8,0.87 81.2,0.59 81.6,0.50 82.0,0.59 82.4,0.87 82.8,1.28 83.2,1.77 83.6,2.28 84.0,2.74 84.4,3.09 84.8,3.28 85.2,3.28 85.6,3.09 86.0,2.74 86.4,2.28 86.8,1.77 87.2,1.28 87.6,0.87 88.0,0.59 88.4,0.50 88.8,0.59 89.2,0.87 89.6,1.28 90.0,1.77 90.4,2.28 90.8,2.74 91.2,3.09 91.6,3.28 92.0,3.28 92.4,3.09 92.8,2.74 93.2,2.28 93.6,1.77 94.0,1.28 94.4,0.87 94.8,0.59 95.2,0.50 95.6,0.59 96.0,0.87 96.4,1.28 96.8,1.77 97.2,2.28 97.6,2.74 98.0,3.09 98.4,3.28 98.8,3.28 99.2,3.09 99.6,2.74 100.0,2.28 100.4,1.77 100.8,1.28 101.2,0.87 101.6,0.59 102.0,0.50 102.4,0.59 102.8,0.87 103.2,1.28 103.6,1.77 104.0,2.28 104.4,2.74 104.8,3.09 105.2,3.28 105.6,3.28 106.0,3.09 106.4,2.74 106.8,2.28 107.2,1.77 107.6,1.28 108.0,0.87 108.4,0.59 108.8,0.50 109.2,0.59 109.6,0.87 110.0,1.28 110.4,1.77 110.8,2.28 111.2,2.74 111.6,3.09 112.0,3.28 112.4,3.28 112.8,3.09 113.2,2.74 113.6,2.28 114.0,1.77 114.4,1.28 114.8,0.87 115.2,0.59 115.6,0.50 116.0,0.59 116.4,0.87 116.8,1.28 117.2,1.77 117.6,2.28 118.0,2.74 118.4,3.09 118.8,3.28 119.2,3.28 119.6,3.09 120.0,2.74 120.4,2.28 120.8,1.77 121.2,1.28 121.6,0.87 122.0,0.59 122.4,0.50 122.8,0.59 123.2,0.87 123.6,1.28 124.0,1.77 124.4,2.28 124.8,2.74 125.2,3.09 125.6,3.28 126.0,3.28 126.4,3.09 126.8,2.74 127.2,2.28 127.6,1.77 128.0,1.28 128.4,0.87 128.8,0.59 129.2,0.50 129.6,0.59 130.0,0.87 130.4,1.28 130.8,1.77 131.2,2.28 131.6,2.74 132.0,3.09 132.4,3.28 132.8,3.28 133.2,3.09 133.6,2.74 134.0,2.28 134.4,1.77 134.8,1.28 135.2,0.87 135.6,0.59 136.0,0.50 136.4,0.59 136.8,0.87 137.2,1.28 137.6,1.77 138.0,2.28 138.4,2.74 138.8,3.09 139.2,3.28 139.6,3.28 140.0,3.09 140.4,2.74 140.8,2.28 141.2,1.77 141.6,1.28 142.0,0.87 142.4,0.59 142.8,0.50 143.2,0.59 143.6,0.87 144.0,1.28 144.4,1.77 144.8,2.28 145.2,2.74 145.6,3.09 146.0,3.28 146.4,3.28 146.8,3.09 147.2,2.74 147.6,2.28 148.0,1.77 148.4,1.28 148.8,0.87 149.2,0.59 149.6,0.50 150.0,0.59 150.4,0.87 150.8,1.28 151.2,1.77 151.6,2.28 152.0,2.74 152.4,3.09 152.8,3.28 153.2,3.28 153.6,3.09 154.0,2.74 154.4,2.28 154.8,1.77 155.2,1.28 155.6,0.87 156.0,0.59 156.4,0.50 156.8,0.59 157.2,0.87 157.6,1.28 158.0,1.77 158.4,2.28 158.8,2.74 159.2,3.09 159.6,3.28 160.0,3.28 160.4,3.09 160.8,2.74 161.2,2.28 161.6,1.77 162.0,1.28 162.4,0.87 162.8,0.59 163.2,0.50 163.6,0.59 164.0,0.87 164.4,1.28 164.8,1.77 165.2,2.28 165.6,2.74 166.0,3.09 166.4,3.28 166.8,3.28 167.2,3.09 167.6,2.74 168.0,2.28 168.4,1.77 168.8,1.28 169.2,0.87 169.6,0.59 170.0,0.50 170.4,0.59 170.8,0.87 171.2,1.28 171.6,1.77 172.0,2.28 172.4,2.74 172.8,3.09 173.2,3.28 173.6,3.28 174.0,3.09 174.4,2.74 174.8,2.28 175.2,1.77 175.6,1.28 176.0,0.87 176.4,0.59 176.8,0.50 177.2,0.59 177.6,0.87 178.0,1.28 178.4,1.77 178.8,2.28 179.2,2.74 179.6,3.09 180.0,3.28 180.4,3.28 180.8,3.09 181.2,2.74 181.6,2.28 182.0,1.77 182.4,1.28 182.8,0.87 183.2,0.59 183.6,0.50 184.0,0.59 184.4,0.87 184.8,1.28 185.2,1.77 185.6,2.28 186.0,2.74 186.4,3.09 186.8,3.28 187.2,3.28 187.6,3.09 188.0,2.74 188.4,2.28 188.8,1.77 189.2,1.28 189.6,0.87 190.0,0.59 190.4,0.50 190.8,0.59 191.2,0.87 191.6,1.28 192.0,1.77 192.4,2.28 192.8,2.74 193.2,3.09 193.6,3.28 194.0,3.28 194.4,3.09 194.8,2.74 195.2,2.28 195.6,1.77 196.0,1.28 196.4,0.87 196.8,0.59 197.2,0.50 197.6,0.59 198.0,0.87 198.4,1.28 198.8,1.77 199.2,2.28 199.6,2.74 200.0,3.09 200.4,3.28 200.8,3.28 201.2,3.09 201.6,2.74 202.0,2.28 202.4,1.77 202.8,1.28 203.2,0.87 203.6,0.59 204.0,0.50 204.4,0.59 204.8,0.87 205.2,1.28 205.6,1.77 206.0,2.28 206.4,2.74 206.8,3.09 207.2,3.28 207.6,3.28 208.0,3.09 208.4,2.74 208.8,2.28 209.2,1.77 209.6,1.28 210.0,0.87 210.4,0.59 210.8,0.50 211.2,0.59 211.6,0.87 212.0,1.28 212.4,1.77 212.8,2.28 213.2,2.74 213.6,3.09 214.0,3.28 214.4,3.28 214.8,3.09 215.2,2.74 215.6,2.28 216.0,1.77 216.4,1.28 216.8,0.87 217.2,0.59 217.6,0.50 218.0,0.59 218.4,0.87 218.8,1.28 219.2,1.77 219.6,2.28 220.0,2.74 220.4,3.09 220.8,3.28 221.2,3.28 221.6,3.09 222.0,2.74 222.4,2.28 222.8,1.77 223.2,1.28 223.6,0.87 224.0,0.59 224.4,0.50 224.8,0.59 225.2,0.87 225.6,1.28 226.0,1.77 226.4,2.28 226.8,2.74 227.2,3.09 227.6,3.28 228.0,3.28 228.4,3.09 228.8,2.74 229.2,2.28 229.6,1.77 230.0,1.28 230.4,0.87 230.8,0.59 231.2,0.50 231.6,0.59 232.0,0.87 232.4,1.28 232.8,1.77 233.2,2.28 233.6,2.74 234.0,3.09 234.4,3.28 234.8,3.28 235.2,3.09 235.6,2.74 236.0,2.28 236.4,1.77 236.8,1.28 237.2,0.87 237.6,0.59 238.0,0.50 238.4,0.59 238.8,0.87 239.2,1.28 239.6,1.77 240.0,2.28 240.4,2.74 240.8,3.09 241.2,3.28 241.6,3.28 242.0,3.09 242.4,2.74 242.8,2.28 243.2,1.77 243.6,1.28 244.0,0.87 244.4,0.59 244.8,0.50 245.2,0.59 245.6,0.87 246.0,1.28 246.4,1.77 246.8,2.28 247.2,2.74 247.6,3.09 248.0,3.28 248.4,3.28 248.8,3.09 249.2,2.74 249.6,2.28 250.0,1.77 250.4,1.28 250.8,0.87 251.2,0.59 251.6,0.50 252.0,0.59 252.4,0.87 252.8,1.28 253.2,1.77 253.6,2.28 254.0,2.74 254.4,3.09 254.8,3.28 255.2,3.28 255.6,3.09 256.0,2.74 256.4,2.28 256.8,1.77 257.2,1.28 257.6,0.87 258.0,0.59 258.4,0.50 258.8,0.59 259.2,0.87 259.6,1.28 260.0,1.77 260.4,2.28 260.8,2.74 261.2,3.09 261.6,3.28 262.0,3.28 262.4,3.09 262.8,2.74 263.2,2.28 263.6,1.77 264.0,1.28 264.4,0.87 264.8,0.59 265.2,0.50 265.6,0.59 266.0,0.87 266.4,1.28 266.8,1.77 267.2,2.28 267.6,2.74 268.0,3.09 268.4,3.28 268.8,3.28 269.2,3.09 269.6,2.74 270.0,2.28 270.4,1.77 270.8,1.28 271.2,0.87 271.6,0.59 272.0,0.50 272.4,0.59 272.8,0.87 273.2,1.28 273.6,1.77 274.0,2.28 274.4,2.74 274.8,3.09 275.2,3.28 275.6,3.28 276.0,3.09 276.4,2.74 276.8,2.28 277.2,1.77 277.6,1.28 278.0,0.87 278.4,0.59 278.8,0.50 279.2,0.59 279.6,0.87 280.0,1.28 280.4,1.77 280.8,2.28 281.2,2.74 281.6,3.09 282.0,3.28 282.4,3.28 282.8,3.09 283.2,2.74 283.6,2.28 284.0,1.77 284.4,1.28 284.8,0.87 285.2,0.59 285.6,0.50 286.0,0.59 286.4,0.87 286.8,1.28 287.2,1.77 287.6,2.28 288.0,2.74 288.4,3.09 288.8,3.28 289.2,3.28 289.6,3.09 290.0,2.74 290.4,2.28 290.8,1.77 291.2,1.28 291.6,0.87 292.0,0.59 292.4,0.50 292.8,0.59 293.2,0.87 293.6,1.28 294.0,1.77 294.4,2.28 294.8,2.74 295.2,3.09 295.6,3.28 296.0,3.28 296.4,3.09 296.8,2.74 297.2,2.28 297.6,1.77 298.0,1.28 298.4,0.87 298.8,0.59 299.2,0.50 299.6,0.59 300.0,0.87 300.4,1.28 300.8,1.77 301.2,2.28 301.6,2.74 302.0,3.09 302.4,3.28 302.8,3.28 303.2,3.09 303.6,2.74 304.0,2.28 304.4,1.77 304.8,1.28 305.2,0.87 305.6,0.59 306.0,0.50 306.4,0.59 306.8,0.87 307.2,1.28 307.6,1.77 308.0,2.28 308.4,2.74 308.8,3.09 309.2,3.28 309.6,3.28 310.0,3.09 310.4,2.74 310.8,2.28 311.2,1.77 311.6,1.28 312.0,0.87 312.4,0.59 312.8,0.50 313.2,0.59 313.6,0.87 314.0,1.28 314.4,1.77 314.8,2.28 315.2,2.74 315.6,3.09 316.0,3.28 316.4,3.28 316.8,3.09 317.2,2.74 317.6,2.28 318.0,1.77 318.4,1.28 318.8,0.87 319.2,0.59 319.6,0.50 320.0,0.59 320.4,0.87 320.8,1.28 321.2,1.77 321.6,2.28 322.0,2.74 322.4,3.09 322.8,3.28 323.2,3.28 323.6,3.09 324.0,2.74 324.4,2.28 324.8,1.77 325.2,1.28 325.6,0.87 326.0,0.59 326.4,0.50 326.8,0.59" fill="none" stroke="#c0392b" stroke-width="1.15"/></svg>
    <div class="a" style="left:25px;top:166.5px;width:523px;height:6px;background:#f3dada;border-top:1px dotted #e8b8b8"></div>
    <div class="a" style="left:555px;top:0;width:12px;height:172px;background:#f0f0f0"></div>
    <div class="a" style="left:556px;top:22px;width:9px;height:49px;background:#c1c1c1"></div>
    <svg class="a" style="left:557px;top:4px" width="8" height="5" viewBox="0 0 8 5"><path d="M1 4L4 1L7 4Z" fill="#505050"/></svg>
    <svg class="a" style="left:557px;top:164px" width="8" height="5" viewBox="0 0 8 5"><path d="M1 1L4 4L7 1Z" fill="#505050"/></svg>
  </div>
  <svg class="a" style="left:259px;top:320px" width="7" height="13" viewBox="0 0 7 13"><path d="M1.2 1.5H5.8M3.5 1.5V11.3M1.2 11.3H5.8" stroke="#1a1a1a" stroke-width="0.9" fill="none"/></svg>
</div>
</body></html>
